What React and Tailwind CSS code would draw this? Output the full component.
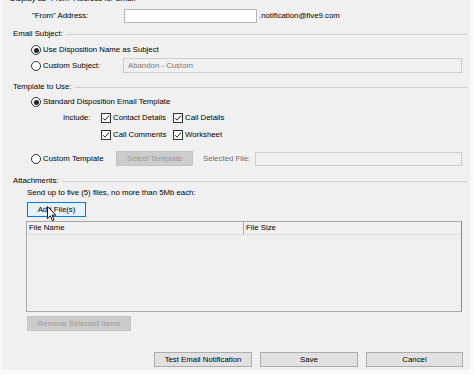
import React from "react";

function Heading({ label }) {
  return (
    <div className="flex items-center pl-[11px] pr-[3px]">
      <span>{label}</span>
      <div className="flex-1 h-px bg-[#d0d0d0] ml-[3px]" />
    </div>
  );
}

function Radio({ checked }) {
  return (
    <span className="w-[10px] h-[10px] rounded-full border border-[#333] bg-white flex items-center justify-center shrink-0">
      {checked && <span className="w-[5px] h-[5px] rounded-full bg-[#222]" />}
    </span>
  );
}

function Check({ label, className = "" }) {
  return (
    <div className={`flex items-center ${className}`}>
      <svg width="10" height="10" viewBox="0 0 10 10" className="shrink-0">
        <rect x="0.5" y="0.5" width="9" height="9" fill="#fff" stroke="#333" />
        <path d="M2 5.2 L4 7.2 L8 2.6" fill="none" stroke="#222" strokeWidth="1" />
      </svg>
      <span className="ml-[2px]">{label}</span>
    </div>
  );
}

function Btn({ children, className = "", disabled }) {
  return (
    <div
      className={`flex items-center justify-center border ${
        disabled
          ? "bg-[#cccccc] border-[#c4c4c4] text-[#9a9a9a]"
          : "bg-[#e1e1e1] border-[#adadad] text-black"
      } ${className}`}
    >
      {children}
    </div>
  );
}

export default function App() {
  return (
    <div className="w-[474px] h-[374px] bg-[#fafafa] overflow-hidden font-['Liberation_Sans',Arial,sans-serif] text-[7.8px] leading-[12px] text-black">
      <div className="w-[470px] h-[370px] bg-[#f0f0f0] border-l-2 border-[#f7f7f7] flex flex-col">
        {/* cut-off heading at the top */}
        <div className="h-[9px] overflow-hidden">
          <div className="-mt-[7px] pl-[8px]">Display as "From" Address for Email</div>
        </div>

        {/* From address */}
        <div className="h-[14px] flex items-center">
          <span className="w-[122px] pl-[30px]">"From" Address:</span>
          <div className="w-[133px] h-[14px] bg-white border border-[#b9b9b9]" />
          <span className="ml-[2px]">.notification@five9.com</span>
        </div>

        {/* Email subject */}
        <div className="mt-[4px] h-[14px] flex flex-col justify-center">
          <Heading label="Email Subject:" />
        </div>
        <div className="mt-[2px] h-[14px] flex items-center pl-[29px]">
          <Radio checked />
          <span className="ml-[2px]">Use Disposition Name as Subject</span>
        </div>
        <div className="mt-[1px] h-[15px] flex items-center pl-[29px]">
          <Radio />
          <span className="ml-[2px] w-[80px]">Custom Subject:</span>
          <div className="w-[339px] h-[15px] border border-[#cdcdcd] bg-[#f0f0f0] flex items-center pl-[4px] text-[#7a7a7a]">
            Abandon - Custom
          </div>
        </div>

        {/* Template */}
        <div className="mt-[7px] h-[14px] flex flex-col justify-center">
          <Heading label="Template to Use:" />
        </div>
        <div className="mt-[1px] h-[14px] flex items-center pl-[29px]">
          <Radio checked />
          <span className="ml-[2px]">Standard Disposition Email Template</span>
        </div>
        <div className="mt-[2px] h-[14px] flex items-center pl-[61px]">
          <span className="w-[38px]">Include:</span>
          <Check label="Contact Details" className="w-[72px]" />
          <Check label="Call Details" />
        </div>
        <div className="mt-[3px] h-[14px] flex items-center pl-[99px]">
          <Check label="Call Comments" className="w-[72px]" />
          <Check label="Worksheet" />
        </div>
        <div className="mt-[9px] h-[15px] flex items-center pl-[29px]">
          <Radio />
          <span className="ml-[2px] w-[73px]">Custom Template</span>
          <Btn disabled className="w-[77px] h-[15px]">Select Template</Btn>
          <span className="ml-[10px] w-[52px] text-[#6d6d6d]">Selected File:</span>
          <div className="w-[207px] h-[14px] border border-[#cdcdcd] bg-[#f0f0f0]" />
        </div>

        {/* Attachments */}
        <div className="mt-[9px] h-[12px] flex flex-col justify-center">
          <Heading label="Attachments:" />
        </div>
        <div className="h-[12px] flex items-center pl-[25px]">
          Send up to five (5) files, no more than 5Mb each:
        </div>
        <div className="mt-[3px] h-[15px] ml-[25px] w-[59px] relative">
          <div className="w-full h-full border border-[#0078d7] bg-[#e5f1fb] flex items-center justify-center">
            Add File(s)
          </div>
          <svg
            width="10"
            height="16"
            viewBox="0 0 10 16"
            className="absolute left-[20px] top-[4px]"
          >
            <path
              d="M0.5 0.5 L0.5 12.5 L3.3 9.8 L5.3 14.6 L7 13.9 L5 9.2 L8.8 9.2 Z"
              fill="#fff"
              stroke="#000"
              strokeWidth="0.9"
              strokeLinejoin="round"
            />
          </svg>
        </div>

        {/* File table */}
        <div className="mt-[4px] ml-[24px] w-[436px] h-[91px] border border-[#a8a8a8] border-r-[#8a8a8a] flex flex-col">
          <div className="h-[13px] flex border-b border-[#dcdcdc]">
            <div className="w-[217px] border-r border-[#a8a8a8] pl-[2px] flex items-center">File Name</div>
            <div className="flex-1 pl-[2px] flex items-center">File Size</div>
          </div>
          <div className="flex-1" />
        </div>
        <div className="mt-[4px] ml-[25px]">
          <Btn disabled className="w-[104px] h-[15px]">Remove Selected Items</Btn>
        </div>

        {/* Footer buttons */}
        <div className="mt-[21px] h-[15px] flex items-center">
          <Btn className="ml-[152px] w-[98px] h-[15px]">Test Email Notification</Btn>
          <Btn className="ml-[8px] w-[98px] h-[15px]">Save</Btn>
          <Btn className="ml-[8px] w-[97px] h-[15px]">Cancel</Btn>
        </div>
      </div>
    </div>
  );
}
